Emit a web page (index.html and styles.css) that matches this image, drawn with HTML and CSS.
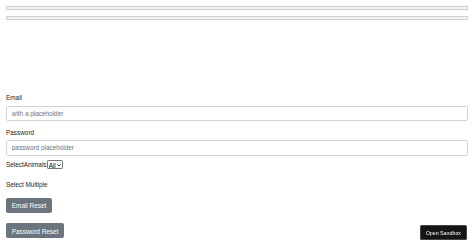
FILE: index.html
```html
<!DOCTYPE html>
<html lang="en">
<head>
<meta charset="utf-8">
<title>Form</title>
<link rel="stylesheet" href="styles.css">
</head>
<body>
<div class="page">
  <div class="bar"></div>
  <div class="bar"></div>
  <form class="form">
    <div class="group">
      <label class="label" for="email">Email</label>
      <input class="control" id="email" type="email" placeholder="with a placeholder">
    </div>
    <div class="group tight">
      <label class="label" for="pw">Password</label>
      <input class="control" id="pw" type="password" placeholder="password placeholder">
    </div>
    <div class="group inline">
      <label class="plain" for="animals">SelectAnimals</label>
      <span class="select-wrap">
        <select class="native" id="animals"><option>All</option></select>
        <svg class="chev" viewBox="0 0 10 6" width="10" height="6" aria-hidden="true"><path d="M1 1l4 4 4-4" fill="none" stroke="#000" stroke-width="1.8" stroke-linecap="round" stroke-linejoin="round"/></svg>
      </span>
    </div>
    <div class="group">
      <label class="plain">Select Multiple</label>
    </div>
    <div class="actions">
      <button type="button" class="btn">Email Reset</button>
      <button type="button" class="btn">Password Reset</button>
    </div>
  </form>
</div>
<button type="button" class="sandbox">Open Sandbox</button>
</body>
</html>
```
FILE: styles.css
```css
html, body {
  margin: 0;
  padding: 0;
  background: #fff;
}
body {
  font-family: "Liberation Sans", Arial, sans-serif;
  color: #212529;
}
.page {
  zoom: 0.4;
  width: 1185px;
  height: 620px;
  box-sizing: border-box;
  padding: 15px 15px 0;
  font-size: 16px;
  line-height: 1.5;
}
.bar {
  height: 10px;
  box-sizing: border-box;
  border: 1px solid #cfcfcf;
  background: #e4e4e4;
  box-shadow: inset 0 0 0 2px #f6f6f6;
  margin-bottom: 15px;
}
.form {
  margin-top: 183px;
}
.group {
  margin-bottom: 16px;
}
.group.tight {
  margin-bottom: 9px;
}
.label {
  display: block;
  margin-bottom: 8px;
}
.plain {
  display: inline-block;
}
.control {
  display: block;
  width: 100%;
  box-sizing: border-box;
  height: 38px;
  padding: 6px 12px;
  font: inherit;
  font-size: 16px;
  line-height: 1.5;
  color: #495057;
  border: 1px solid #ced4da;
  border-radius: 4px;
  background: #fff;
}
.control::placeholder {
  color: #6c757d;
}
.inline {
  display: flex;
  align-items: center;
  height: 28px;
  margin-bottom: 25px;
}
.select-wrap {
  position: relative;
  display: inline-flex;
}
.native {
  appearance: none;
  -webkit-appearance: none;
  font: inherit;
  font-size: 16px;
  line-height: 18px;
  width: 40px;
  height: 22px;
  box-sizing: border-box;
  padding: 1px 0 1px 3px;
  border: 1px solid #767676;
  border-radius: 3px;
  background: #fff;
  color: #000;
}
.chev {
  position: absolute;
  right: 4px;
  top: 8px;
  pointer-events: none;
}
.actions {
  display: flex;
  flex-direction: column;
  align-items: flex-start;
  gap: 25px;
  margin-top: 20px;
}
.btn {
  font: inherit;
  font-size: 16px;
  line-height: 1.5;
  height: 38px;
  padding: 6px 12px;
  color: #fff;
  background: #6c757d;
  border: 1px solid #6c757d;
  border-radius: 4px;
}
.sandbox {
  position: fixed;
  right: 7px;
  bottom: 8px;
  font-family: "Liberation Sans", Arial, sans-serif;
  font-size: 5.3px;
  line-height: 6px;
  padding: 3.5px 5px;
  color: #fff;
  background: #151515;
  border: 0.4px solid rgba(255,255,255,0.2);
  border-radius: 1.6px;
}
```
